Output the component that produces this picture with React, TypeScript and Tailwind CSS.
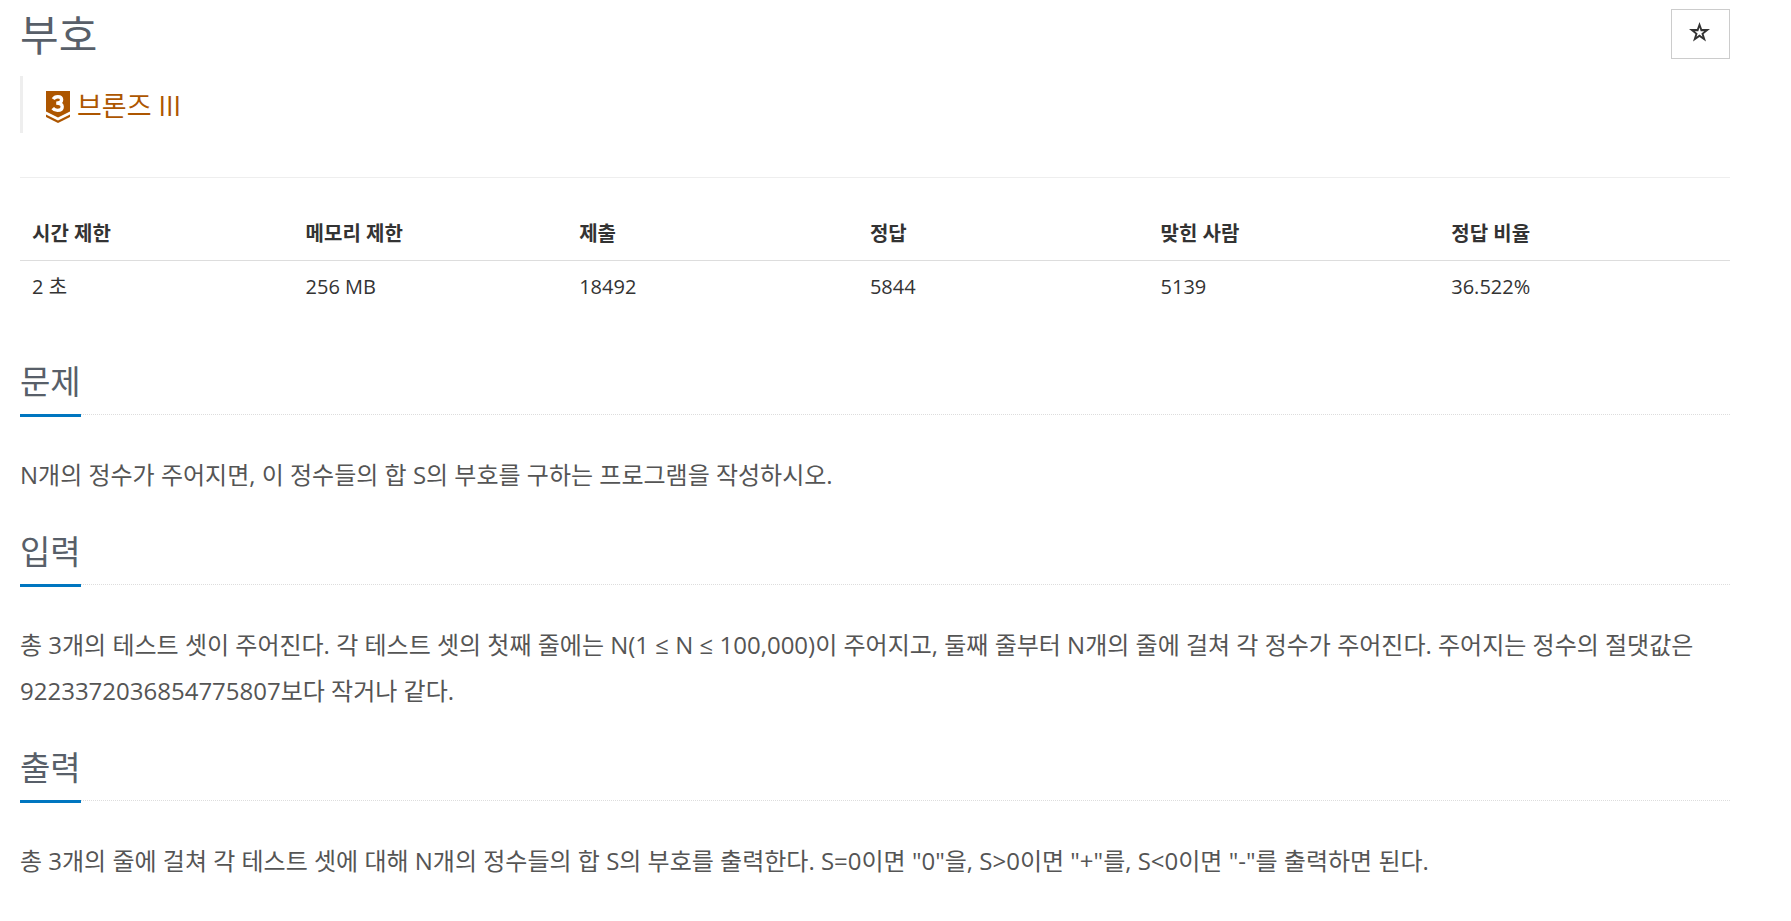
import React from "react";

const stats = [
  { label: "시간 제한", value: "2 초", width: "w-[16%]" },
  { label: "메모리 제한", value: "256 MB", width: "w-[16%]" },
  { label: "제출", value: "18492", width: "w-[17%]" },
  { label: "정답", value: "5844", width: "w-[17%]" },
  { label: "맞힌 사람", value: "5139", width: "w-[17%]" },
  { label: "정답 비율", value: "36.522%", width: "w-[17%]" },
];

function TierBadge() {
  return (
    <svg viewBox="0 0 24 32" className="h-8 w-6" aria-hidden="true">
      <path d="M0 0H24V20.500L12 26.500L0 20.500Z" fill="#ad5600" />
      <path d="M0 23.500L12 29.500L24 23.500V26L12 32L0 26Z" fill="#ad5600" />
      <path d="M7.200 8.200C8.300 6.300 10 5.700 11.800 5.700C14 5.700 15.600 6.800 15.600 8.800C15.600 10.900 13.700 12.100 10.200 12.100C14.300 12.100 16.200 13.500 16.200 15.800C16.200 18.200 14.200 19.400 11.500 19.400C9.500 19.400 8 18.700 6.700 17.100" fill="none" stroke="#fff" strokeWidth="3.4" />
    </svg>
  );
}

function Section({ title, children }: { title: string; children: React.ReactNode }) {
  return (
    <section className="mb-8">
      <div className="mb-[37px] flex border-b border-dotted border-[#dddddd]">
        <h2 className="-mb-[3px] border-b-3 border-[#0076c0] pb-2.5 text-[33px] leading-[44px] text-[#585f69]">{title}</h2>
      </div>
      <p className="text-[24px] leading-[46px] text-[#555555]">{children}</p>
    </section>
  );
}

export default function App() {
  return (
    <main className="bg-white pr-[61px] pl-5 font-['Open_Sans','Noto_Sans_CJK_KR',sans-serif] text-[#333333]">
      <header className="flex items-start justify-between pt-[9px]">
        <h1 className="text-[42px] leading-[52px] text-[#585f69]">부호</h1>
        <button aria-label="즐겨찾기" className="flex h-[50px] w-[59px] items-center justify-center border border-[#cccccc] pr-0.5 pb-1">
          <svg viewBox="0 0 21 20" className="h-5 w-[21px]" aria-hidden="true">
            <path fillRule="evenodd" fill="#333" d="M10.500 0L13 7.100L21 7.100L14.600 12L17 19.500L10.500 15L4 19.500L6.400 12L0 7.100L8 7.100ZM10.500 5.600L9.300 9.200L5.800 9.200L8.600 11.400L7.500 14.800L10.500 12.600L13.500 14.800L12.400 11.400L15.200 9.200L11.700 9.200Z" />
          </svg>
        </button>
      </header>
      <blockquote className="mt-[15px] flex h-[57px] items-center gap-[7px] border-l-3 border-[#eeeeee] pt-1 pl-[23px] text-[27px] leading-9 text-[#ad5600]">
        <TierBadge />
        <span className="pb-0.5">브론즈 III</span>
      </blockquote>
      <hr className="mt-11 border-[#eeeeee]" />
      <table className="mt-7 w-full table-fixed text-left text-[20px]">
        <thead>
          <tr className="border-b border-[#dddddd]">
            {stats.map((s) => <th key={s.label} className={s.width + " px-3 pt-3.5 pb-3 leading-7 font-bold"}>{s.label}</th>)}
          </tr>
        </thead>
        <tbody>
          <tr>{stats.map((s) => <td key={s.label} className="px-3 py-3 leading-7">{s.value}</td>)}</tr>
        </tbody>
      </table>
      <div className="mt-[47px]">
        <Section title="문제">N개의 정수가 주어지면, 이 정수들의 합 S의 부호를 구하는 프로그램을 작성하시오.</Section>
        <Section title="입력">총 3개의 테스트 셋이 주어진다. 각 테스트 셋의 첫째 줄에는 N(1 ≤ N ≤ 100,000)이 주어지고, 둘째 줄부터 N개의 줄에 걸쳐 각 정수가 주어진다. 주어지는 정수의 절댓값은 9223372036854775807보다 작거나 같다.</Section>
        <Section title="출력">총 3개의 줄에 걸쳐 각 테스트 셋에 대해 N개의 정수들의 합 S의 부호를 출력한다. S=0이면 "0"을, S&gt;0이면 "+"를, S&lt;0이면 "-"를 출력하면 된다.</Section>
      </div>
    </main>
  );
}
